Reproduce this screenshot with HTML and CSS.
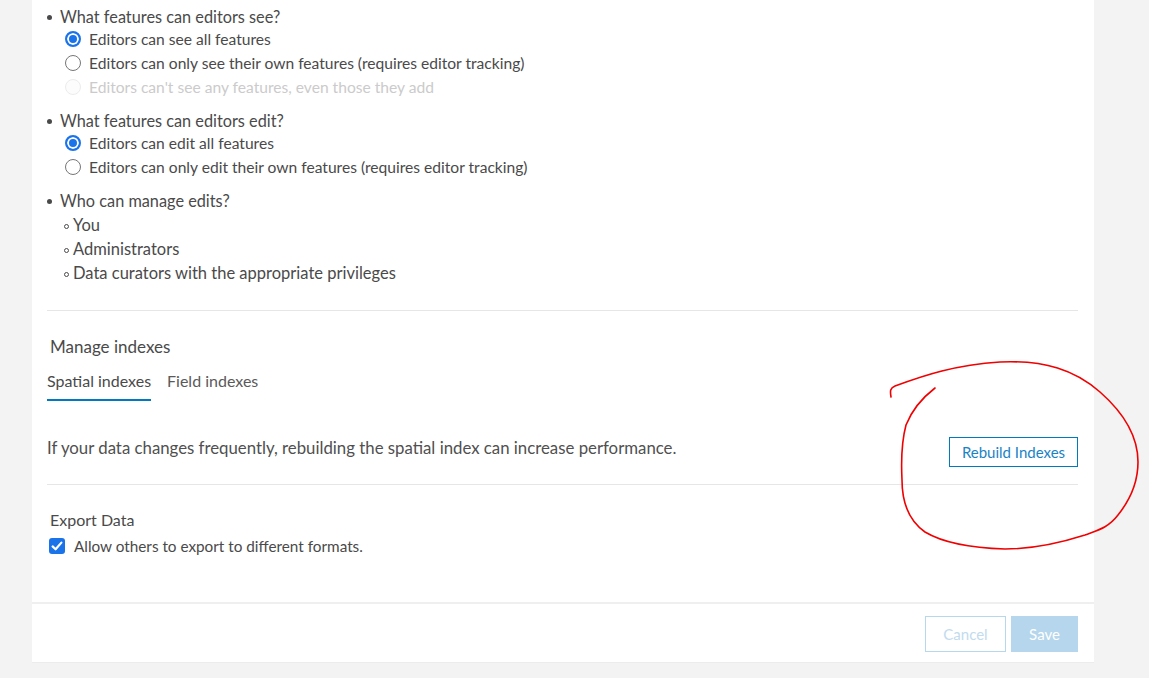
FILE: index.html
```html
<!DOCTYPE html>
<html lang="en">
<head>
<meta charset="utf-8">
<title>Settings</title>
<link rel="stylesheet" href="styles.css">
</head>
<body>
<div class="card">
  <div class="content">
    <div class="group">
      <div class="question"><span class="dot"></span>What features can editors see?</div>
      <div class="option"><span class="radio checked"></span>Editors can see all features</div>
      <div class="option"><span class="radio"></span>Editors can only see their own features (requires editor tracking)</div>
      <div class="option disabled"><span class="radio"></span>Editors can't see any features, even those they add</div>
    </div>
    <div class="group">
      <div class="question"><span class="dot"></span>What features can editors edit?</div>
      <div class="option"><span class="radio checked"></span>Editors can edit all features</div>
      <div class="option"><span class="radio"></span>Editors can only edit their own features (requires editor tracking)</div>
    </div>
    <div class="group last">
      <div class="question"><span class="dot"></span>Who can manage edits?</div>
      <div class="sub-list">
        <div class="sub"><span class="ring"></span>You</div>
        <div class="sub"><span class="ring"></span>Administrators</div>
        <div class="sub"><span class="ring"></span>Data curators with the appropriate privileges</div>
      </div>
    </div>

    <hr class="divider first">

    <div class="section-title">Manage indexes</div>
    <div class="tabs">
      <div class="tab active">Spatial indexes</div>
      <div class="tab">Field indexes</div>
    </div>
    <div class="index-row">
      <p class="index-text">If your data changes frequently, rebuilding the spatial index can increase performance.</p>
      <button class="btn-outline">Rebuild Indexes</button>
    </div>

    <hr class="divider">

    <div class="section-title export">Export Data</div>
    <label class="check-row"><span class="checkbox"><svg viewBox="0 0 16 16" width="16" height="16"><path d="M3.6 8.4 L6.6 11.3 L12.4 4.6" fill="none" stroke="#fff" stroke-width="2.2" stroke-linecap="round" stroke-linejoin="round"/></svg></span>Allow others to export to different formats.</label>
  </div>
  <div class="footer">
    <button class="btn-cancel">Cancel</button>
    <button class="btn-save">Save</button>
  </div>
</div>

<svg class="annotation" width="1149" height="678" viewBox="0 0 1149 678">
  <path d="M891 397 C890 391 890 388 895 386 C925 375 955 365 1000 362 C1045 360 1075 370 1100 392 C1125 414 1138 438 1138 462 C1138 482 1130 500 1118 515 C1108 528 1098 530 1085 535 C1060 543 1035 549 1005 549 C975 548 945 544 925 532 C908 520 902 502 902 480 C901 460 902 440 906 425 C912 410 922 398 935 388" fill="none" stroke="#f00000" stroke-width="1.6" stroke-linecap="round"/>
</svg>
</body>
</html>
```
FILE: styles.css
```css
html, body {
  margin: 0;
  padding: 0;
}
body {
  background: #f3f3f3;
  font-family: Lato, "Noto Sans", sans-serif;
  color: #4a4a4a;
  font-size: 15px;
  width: 1149px;
  height: 678px;
  overflow: hidden;
  position: relative;
}
.card {
  margin-left: 32px;
  width: 1062px;
  background: #fff;
  border-bottom: 1px solid #ececec;
  box-sizing: border-box;
}
.content {
  padding: 6px 16px 0 15px;
  height: 602px;
  box-sizing: border-box;
}
.group {
  margin-bottom: 11px;
}
.group.last {
  margin-bottom: 0;
}
.question {
  display: flex;
  align-items: center;
  height: 21px;
  line-height: 21px;
  font-size: 16.3px;
}
.dot {
  width: 5px;
  height: 5px;
  border-radius: 50%;
  background: #4a4a4a;
  margin-right: 8px;
  margin-top: 1px;
}
.option {
  display: flex;
  align-items: center;
  height: 24px;
  padding-left: 18px;
  font-size: 15.6px;
}
.option.disabled {
  color: #cbcbcb;
}
.radio {
  width: 16px;
  height: 16px;
  box-sizing: border-box;
  border-radius: 50%;
  border: 1px solid #767676;
  margin-right: 8px;
  background: #fff;
  flex: none;
}
.radio.checked {
  border: 2px solid #1a73e8;
  background: #1a73e8;
  box-shadow: inset 0 0 0 2px #fff;
}
.option.disabled .radio {
  border-color: #ececec;
  background: #fcfcfc;
}
.sub-list {
  margin-top: 2px;
}
.sub {
  display: flex;
  align-items: center;
  height: 24px;
  padding-left: 17px;
  font-size: 16.5px;
}
.ring {
  width: 5px;
  height: 5px;
  box-sizing: border-box;
  border: 1px solid #4a4a4a;
  border-radius: 50%;
  margin-right: 4px;
  margin-top: 2px;
}
.divider {
  border: 0;
  border-top: 1px solid #e6e6e6;
  margin: 0;
}
.divider.first {
  margin-top: 25px;
}
.section-title {
  margin-top: 26px;
  padding-left: 3px;
  line-height: 20px;
  height: 20px;
  font-size: 17px;
}
.tabs {
  display: flex;
  margin-top: 14px;
  font-size: 16px;
}
.tab {
  line-height: 20px;
  padding-bottom: 8px;
  margin-right: 16px;
  color: #5a5a5a;
}
.tab.active {
  color: #4a4a4a;
  border-bottom: 2px solid #0079c1;
}
.index-row {
  display: flex;
  justify-content: space-between;
  align-items: flex-start;
  margin-top: 36px;
  margin-bottom: 17px;
}
.index-text {
  margin: 0;
  padding-top: 1px;
  line-height: 20px;
  font-size: 16.8px;
  color: #505050;
}
.btn-outline {
  font-family: Lato, "Noto Sans", sans-serif;
  font-size: 15px;
  color: #1b82c6;
  background: #fff;
  border: 1px solid #0079c1;
  height: 30px;
  width: 129px;
  padding: 0;
}
.section-title.export {
  margin-top: 25px;
  padding-left: 3px;
  font-size: 16px;
}
.check-row {
  display: flex;
  align-items: center;
  height: 22px;
  margin-top: 5px;
  padding-left: 2px;
  font-size: 15.3px;
}
.checkbox {
  width: 16px;
  height: 16px;
  border-radius: 3px;
  background: #1a73e8;
  margin-right: 9px;
  display: flex;
}
.footer {
  border-top: 2px solid #efefef;
  height: 60px;
  box-sizing: border-box;
  display: flex;
  justify-content: flex-end;
  align-items: flex-start;
  padding: 12px 16px 0 0;
  gap: 5px;
}
.btn-cancel, .btn-save {
  font-family: Lato, "Noto Sans", sans-serif;
  font-size: 15px;
  height: 36px;
  padding: 0;
}
.btn-cancel {
  width: 81px;
  background: #fff;
  color: #c2dbee;
  border: 1px solid #b7d7ec;
}
.btn-save {
  width: 67px;
  background: #b5d6ec;
  color: #fff;
  border: 0;
}
.annotation {
  position: absolute;
  left: 0;
  top: 0;
  pointer-events: none;
}
```
